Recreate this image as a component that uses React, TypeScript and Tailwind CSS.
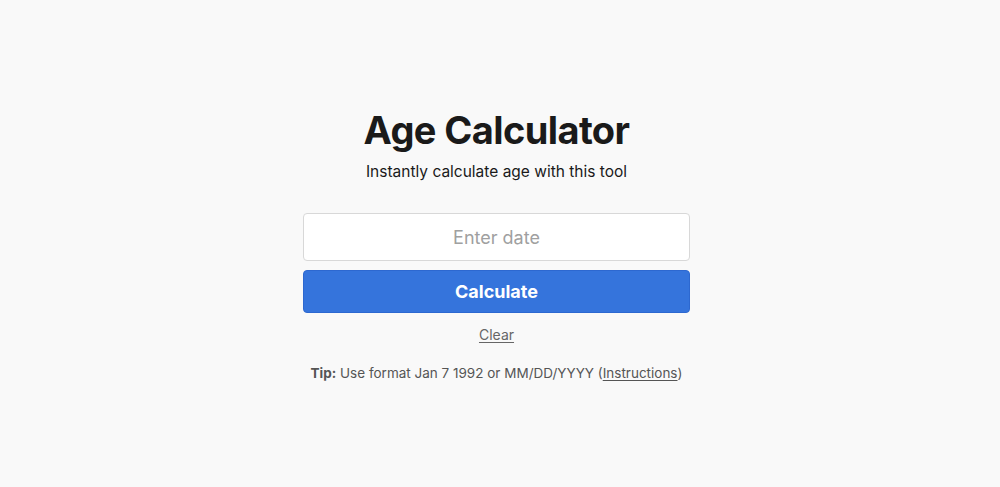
export default function App() {
  return (
    <div className="min-h-[487px] w-full bg-[#f9f9f9] pr-[7px] font-['Inter',sans-serif] text-[#1a1a1a]">
      <div className="mx-auto flex w-[387px] flex-col items-center pt-[106px]">
        <h1 className="text-[38px] font-bold leading-[48px] tracking-[-0.6px]">Age Calculator</h1>
        <p className="mt-[7px] text-[15.5px] leading-[22px]">Instantly calculate age with this tool</p>

        <input
          type="text"
          placeholder="Enter date"
          className="mt-[30px] h-[48px] w-full rounded-[4px] border border-[#d8d8d8] bg-white text-center text-[18px] outline-none placeholder:text-[#a0a0a0]"
        />
        <button className="mt-[9px] h-[43px] w-full rounded-[4px] border border-[#2d68d0] bg-[#3574dc] text-[18px] font-bold text-white">
          Calculate
        </button>

        <a href="#" className="mt-[12px] text-[14px] leading-[20px] text-[#666] underline underline-offset-2">
          Clear
        </a>

        <p className="mt-[18px] text-[13.5px] leading-[20px] text-[#555]">
          <span className="font-bold">Tip:</span> Use format Jan 7 1992 or MM/DD/YYYY (
          <a href="#" className="underline underline-offset-2">Instructions</a>)
        </p>
      </div>
    </div>
  );
}
